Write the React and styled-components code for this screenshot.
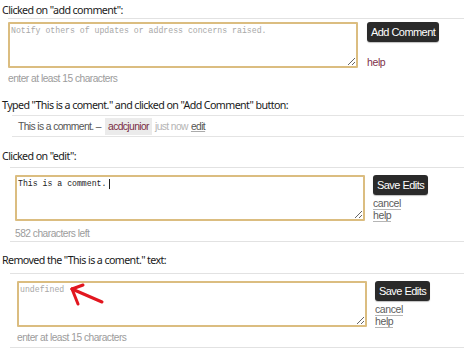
import React from "react";
import styled, { createGlobalStyle } from "styled-components";

const GlobalStyle = createGlobalStyle`
  html, body { margin: 0; padding: 0; background: #fff; }
  * { box-sizing: border-box; }
`;

const sans = `"Liberation Sans", Arial, sans-serif`;

const Page = styled.div`
  width: 474px;
  height: 351px;
  overflow: hidden;
  background: #fff;
`;

const Heading = styled.div`
  font-family: "Noto Sans", "Open Sans", sans-serif;
  font-size: 10.7px;
  letter-spacing: -0.6px;
  line-height: 16px;
  color: #1b1b1b;
  padding-left: 2px;
  margin-top: ${(p) => p.$mt}px;
  white-space: nowrap;
`;

const Rule = styled.div`
  margin: ${(p) => p.$mt || 0}px 10px 0 ${(p) => p.$ml}px;
  border-top: 1px solid #e2e2e2;
`;

const EditorRow = styled.div`
  display: flex;
  align-items: flex-start;
  gap: ${(p) => p.$gap}px;
  margin: ${(p) => p.$mt}px 0 0 ${(p) => p.$ml}px;
`;

const Field = styled.div`
  position: relative;
  width: 350px;
  height: 46px;
  flex: none;
`;

const TextBox = styled.textarea`
  display: block;
  width: 350px;
  height: 46px;
  border: 2px solid #dbbd80;
  border-radius: 1px;
  padding: 2px 1px;
  margin: 0;
  font-family: "Liberation Mono", "DejaVu Sans Mono", monospace;
  font-size: 8.2px;
  line-height: 10px;
  color: #222;
  background: #fff;
  outline: none;
  resize: both;
  &::placeholder {
    color: #a8a8a8;
  }
`;

const Caret = styled.span`
  position: absolute;
  left: 94px;
  top: 4px;
  width: 1px;
  height: 10px;
  background: #222;
`;

const Arrow = styled.svg`
  position: absolute;
  left: 50px;
  top: 2px;
  overflow: visible;
`;

const Side = styled.div`
  display: flex;
  flex-direction: column;
  align-items: flex-start;
`;

const DarkButton = styled.button`
  height: 20px;
  padding: 0 ${(p) => p.$px}px;
  margin: 0;
  border: none;
  border-radius: 3px;
  background: #2a2a2a;
  color: #fff;
  font-family: ${sans};
  font-size: 11px;
  letter-spacing: -0.55px;
  line-height: 20px;
  box-shadow: 0 1px 1px rgba(0, 0, 0, 0.25);
  cursor: pointer;
`;

const HelpLink = styled.a`
  margin-top: 13px;
  font-family: ${sans};
  font-size: 10.5px;
  letter-spacing: -0.4px;
  line-height: 14px;
  color: #7e3049;
  text-decoration: none;
`;

const EditLinks = styled.div`
  display: flex;
  flex-direction: column;
  align-items: flex-start;
  margin-top: 3px;
`;

const GrayLink = styled.a`
  font-family: ${sans};
  font-size: 10.5px;
  letter-spacing: -0.4px;
  line-height: 11px;
  color: #5c5c5c;
  text-decoration: none;
  border-bottom: 1px solid #b5b5b5;
`;

const Hint = styled.div`
  margin: ${(p) => p.$mt}px 0 0 ${(p) => p.$ml}px;
  font-family: ${sans};
  font-size: 10.2px;
  letter-spacing: -0.5px;
  line-height: 14px;
  color: #9c9c9c;
`;

const CommentBlock = styled.div`
  margin: ${(p) => p.$mt}px 10px 0 12px;
  border-top: 1px solid #e4e4e4;
  border-bottom: 1px solid #e4e4e4;
  height: 22px;
  padding-left: 6px;
  display: flex;
  align-items: center;
  font-family: ${sans};
  font-size: 10.3px;
  letter-spacing: -0.6px;
  color: #555;
  white-space: pre;
`;

const UserTag = styled.span`
  background: #ebebeb;
  color: #7a2b44;
  padding: 0 3px;
  line-height: 17px;
  margin: 0 3px 0 4px;
`;

const Muted = styled.span`
  color: #b4b4b4;
`;

const EditWord = styled.span`
  color: #555;
  text-decoration: underline;
  text-decoration-color: #aaa;
  margin-left: 3px;
`;

export default function App() {
  return (
    <Page>
      <GlobalStyle />

      <Heading $mt={2}>Clicked on "add comment":</Heading>
      <Rule $ml={8} />
      <EditorRow $mt={3} $ml={8} $gap={9}>
        <Field>
          <TextBox
            readOnly
            placeholder="Notify others of updates or address concerns raised."
          />
        </Field>
        <Side>
          <DarkButton $px={4}>Add Comment</DarkButton>
          <HelpLink>help</HelpLink>
        </Side>
      </EditorRow>
      <Hint $mt={3} $ml={8}>enter at least 15 characters</Hint>

      <Heading $mt={11}>
        Typed "This is a coment." and clicked on "Add Comment" button:
      </Heading>
      <CommentBlock $mt={2}>
        This is a comment. –<UserTag>acdcjunior</UserTag>
        <Muted>just now</Muted>
        <EditWord>edit</EditWord>
      </CommentBlock>

      <Heading $mt={11}>Clicked on "edit":</Heading>
      <Rule $mt={3} $ml={10} />
      <EditorRow $mt={7} $ml={15} $gap={8}>
        <Field>
          <TextBox readOnly value="This is a comment." />
          <Caret />
        </Field>
        <Side>
          <DarkButton $px={4}>Save Edits</DarkButton>
          <EditLinks>
            <GrayLink>cancel</GrayLink>
            <GrayLink>help</GrayLink>
          </EditLinks>
        </Side>
      </EditorRow>
      <Hint $mt={5} $ml={15}>582 characters left</Hint>
      <Rule $ml={10} />

      <Heading $mt={10}>Removed the "This is a coment." text:</Heading>
      <Rule $mt={5} $ml={10} />
      <EditorRow $mt={7} $ml={17} $gap={8}>
        <Field>
          <TextBox readOnly placeholder="undefined" />
          <Arrow width="40" height="24" viewBox="0 0 40 24">
            <g
              fill="none"
              stroke="#e2161f"
              strokeWidth="3"
              strokeLinecap="round"
              strokeLinejoin="round"
            >
              <path d="M35 19 L5 6" />
              <path d="M5 6 L16 2" />
              <path d="M5 6 L11 21" />
            </g>
          </Arrow>
        </Field>
        <Side>
          <DarkButton $px={4}>Save Edits</DarkButton>
          <EditLinks>
            <GrayLink>cancel</GrayLink>
            <GrayLink>help</GrayLink>
          </EditLinks>
        </Side>
      </EditorRow>
      <Hint $mt={3} $ml={17}>enter at least 15 characters</Hint>
      <Rule $mt={2} $ml={10} />
    </Page>
  );
}
